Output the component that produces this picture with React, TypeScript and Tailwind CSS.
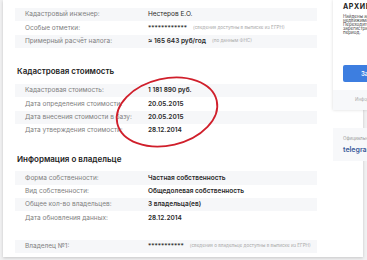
import React from 'react';

type Row = {
  label: string;
  value: string;
  note?: string;
  bold?: boolean;
};

const generalRows: Row[] = [
  { label: 'Кадастровый инженер:', value: 'Нестеров Е.О.' },
  { label: 'Особые отметки:', value: '************', note: '(сведения доступны в выписке из ЕГРН)' },
  { label: 'Примерный расчёт налога:', value: '≈ 165 643 руб/год', note: '(по данным ФНС)', bold: true },
];

const costRows: Row[] = [
  { label: 'Кадастровая стоимость:', value: '1 181 890 руб.', bold: true },
  { label: 'Дата определения стоимости:', value: '20.05.2015', bold: true },
  { label: 'Дата внесения стоимости в базу:', value: '20.05.2015', bold: true },
  { label: 'Дата утверждения стоимости:', value: '28.12.2014', bold: true },
];

const ownerRows: Row[] = [
  { label: 'Форма собственности:', value: 'Частная собственность', bold: true },
  { label: 'Вид собственности:', value: 'Общедолевая собственность', bold: true },
  { label: 'Общее кол-во владельцев:', value: '3 владельца(ев)', bold: true },
  { label: 'Дата обновления данных:', value: '28.12.2014', bold: true },
];

function InfoRow({ row, shaded }: { row: Row; shaded: boolean }) {
  return (
    <div className={`flex items-center h-[13.33px] pl-[10px] ${shaded ? 'bg-[#f6f7f9]' : 'bg-white'}`}>
      <div className="w-[123px] shrink-0 text-[6.5px] leading-none text-[#808080]">{row.label}</div>
      <div className={`text-[6.5px] leading-none text-[#2a2a2a] whitespace-nowrap ${row.bold ? 'font-semibold' : 'font-normal'}`}>
        {row.value}
      </div>
      {row.note && (
        <div className="ml-[6px] text-[4.6px] leading-none text-[#a8a8a8] whitespace-nowrap">{row.note}</div>
      )}
    </div>
  );
}

function Table({ rows }: { rows: Row[] }) {
  return (
    <div className="flex flex-col">
      {rows.map((r, i) => (
        <InfoRow key={r.label} row={r} shaded={i % 2 === 0} />
      ))}
    </div>
  );
}

export default function App() {
  return (
    <div className="w-[367px] h-[260px] overflow-hidden bg-[#f1f1f2] font-['Inter',sans-serif]">
      <div className="ml-[3px] w-[360px] bg-white shadow-[0_1px_3px_rgba(0,0,0,0.18)] flex items-start pb-[4px] pl-[12px]">
        {/* Main column */}
        <div className="relative w-[302px] shrink-0 pt-[8px]">
          <Table rows={generalRows} />

          <h2 className="mt-[18px] ml-[2px] h-[10px] flex items-center text-[8px] font-semibold text-[#222]">
            Кадастровая стоимость
          </h2>
          <div className="mt-[8px]">
            <Table rows={costRows} />
          </div>

          <h2 className="mt-[17px] ml-[2px] h-[10px] flex items-center text-[8px] font-semibold text-[#222]">
            Информация о владельце
          </h2>
          <div className="mt-[7px]">
            <Table rows={ownerRows} />
          </div>

          <div className="mt-[15px]">
            <InfoRow
              row={{ label: 'Владелец №1:', value: '***********', note: '(сведения о владельце доступны в выписке из ЕГРН)' }}
              shaded
            />
          </div>

          {/* hand drawn red circle */}
          <svg className="absolute left-0 top-0 pointer-events-none" width="302" height="258" viewBox="0 0 302 258">
            <ellipse
              cx="152"
              cy="112"
              rx="51"
              ry="33.5"
              transform="rotate(-13 152 112)"
              fill="none"
              stroke="#d01f2b"
              strokeWidth="1.8"
            />
          </svg>
        </div>

        {/* Sidebar */}
        <div className="ml-[16px] w-[100px] shrink-0 flex flex-col gap-[18px]">
          <div className="bg-white shadow-[0_0_3px_rgba(0,0,0,0.15)] flex flex-col">
            <div className="px-[10px] pt-[3px] pb-[8px]">
              <div className="h-[8.5px] flex items-center text-[7px] font-bold tracking-[0.6px] text-[#222] whitespace-nowrap">
                АРХИВНЫЕ ДАННЫЕ
              </div>
              <p className="mt-[3.5px] text-[4.5px] leading-[4px] text-[#444] whitespace-nowrap">
                Найдены архивные сведения о<br />
                недвижимости за прошлые годы.<br />
                Переходите, чтобы узнать, кто был<br />
                зарегистрирован на объекте в этот<br />
                период.
              </p>
              <button className="mt-[30px] w-full h-[17px] rounded-[2px] bg-[#3d7ee0] text-white text-[6px] font-semibold whitespace-nowrap flex items-center pl-[18px]">
                Заказать отчёт
              </button>
            </div>
            <div className="bg-[#f7f8fa] h-[20px] flex items-center pl-[22px] text-[4.5px] text-[#aaa] whitespace-nowrap">
              Информация обновлена
            </div>
          </div>

          <div className="bg-[#f7f8fa] px-[10px] py-[8px] flex flex-col gap-[4px]">
            <div className="text-[4.5px] leading-[5.5px] text-[#999] whitespace-nowrap">Официальный канал</div>
            <div className="text-[7px] font-semibold text-[#3a5a9a] leading-none">telegram</div>
          </div>
        </div>
      </div>
    </div>
  );
}
